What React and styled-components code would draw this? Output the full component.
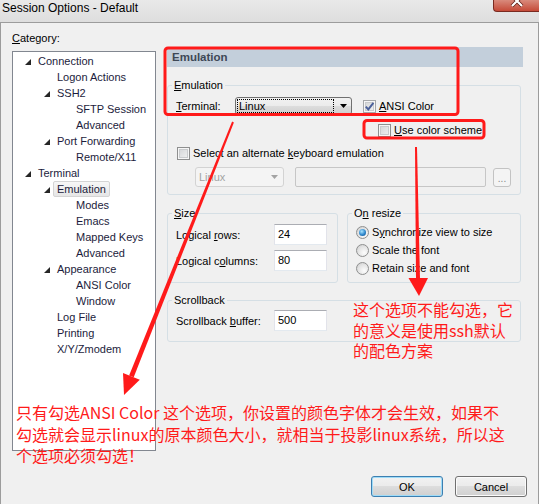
import React from "react";
import styled, { createGlobalStyle } from "styled-components";

const TREE = [
  { label: "Connection", level: 0, open: true },
  { label: "Logon Actions", level: 1 },
  { label: "SSH2", level: 1, open: true },
  { label: "SFTP Session", level: 2 },
  { label: "Advanced", level: 2 },
  { label: "Port Forwarding", level: 1, open: true },
  { label: "Remote/X11", level: 2 },
  { label: "Terminal", level: 0, open: true },
  { label: "Emulation", level: 1, open: true, selected: true },
  { label: "Modes", level: 2 },
  { label: "Emacs", level: 2 },
  { label: "Mapped Keys", level: 2 },
  { label: "Advanced", level: 2 },
  { label: "Appearance", level: 1, open: true },
  { label: "ANSI Color", level: 2 },
  { label: "Window", level: 2 },
  { label: "Log File", level: 1 },
  { label: "Printing", level: 1 },
  { label: "X/Y/Zmodem", level: 1 },
];

const Expander = () => (
  <svg width="6" height="6" viewBox="0 0 6 6">
    <polygon points="6,0 6,6 0,6" fill="#262626" />
  </svg>
);

const Check = () => (
  <svg width="11" height="11" viewBox="0 0 11 11">
    <path d="M1.8 5.6 L4.3 8.4 L9.4 1.8" fill="none" stroke="#4a5f9a" strokeWidth="1.9" />
  </svg>
);

const Arrow = () => (
  <svg width="7" height="4" viewBox="0 0 7 4">
    <polygon points="0,0 7,0 3.5,4" fill="currentColor" />
  </svg>
);

const App = () => {
  return (
    <Window>
      <GlobalStyle />
      <TitleBar>
        <Title>Session Options - Default</Title>
        <CloseButton>
          <svg width="46" height="12" viewBox="0 0 46 12">
            <path d="M19 -4 L29 6 M29 -4 L19 6" stroke="#5a1a12" strokeWidth="3.6" />
            <path d="M19 -4 L29 6 M29 -4 L19 6" stroke="#fff" strokeWidth="2.2" />
          </svg>
        </CloseButton>
      </TitleBar>

      <Client>
        <Main>
          <LeftColumn>
            <Caption>
              <u>C</u>ategory:
            </Caption>
            <Tree>
              {TREE.map((item, i) => (
                <TreeItem key={i} $level={item.level}>
                  <Toggle>{item.open && <Expander />}</Toggle>
                  <ItemLabel $selected={item.selected}>{item.label}</ItemLabel>
                </TreeItem>
              ))}
            </Tree>
          </LeftColumn>

          <RightColumn>
            <Header>Emulation</Header>

            <Groups>
              <Group $mt={11} $pt={5} $pb={7}>
                <Legend>
                  <u>E</u>mulation
                </Legend>
                <Row $h={18}>
                  <FieldLabel $w={59}>
                    <u>T</u>erminal:
                  </FieldLabel>
                  <Select>
                    <Focus>Linux</Focus>
                    <SelectArrow>
                      <Arrow />
                    </SelectArrow>
                  </Select>
                  <CheckRow $ml={11}>
                    <CheckBox $muted>
                      <Check />
                    </CheckBox>
                    <span>
                      <u>A</u>NSI Color
                    </span>
                  </CheckRow>
                </Row>
                <Row $h={16} $mt={7}>
                  <CheckRow $ml={202}>
                    <CheckBox />
                    <span>
                      <u>U</u>se color scheme
                    </span>
                  </CheckRow>
                </Row>
                <Row $h={16} $mt={7}>
                  <CheckRow $ml={1}>
                    <CheckBox />
                    <span>
                      Select an alternate <u>k</u>eyboard emulation
                    </span>
                  </CheckRow>
                </Row>
                <Row $h={20} $mt={6}>
                  <DisabledCombo>
                    <span>Linux</span>
                    <Arrow />
                  </DisabledCombo>
                  <DisabledField />
                  <DotsButton>...</DotsButton>
                </Row>
              </Group>

              <Pair>
                <Group $mt={11} $pt={4} $pb={11} $flex="0 0 171px">
                  <Legend>
                    <u>S</u>ize
                  </Legend>
                  <Row $h={21}>
                    <FieldLabel $w={98}>
                      Logical <u>r</u>ows:
                    </FieldLabel>
                    <TextBox>24</TextBox>
                  </Row>
                  <Row $h={21} $mt={5}>
                    <FieldLabel $w={98}>
                      Logical c<u>o</u>lumns:
                    </FieldLabel>
                    <TextBox>80</TextBox>
                  </Row>
                </Group>

                <Group $mt={11} $pt={3} $pb={5} $flex="1">
                  <Legend>
                    O<u>n</u> resize
                  </Legend>
                  <RadioRow>
                    <Radio $on />
                    <span>
                      S<u>y</u>nchronize view to size
                    </span>
                  </RadioRow>
                  <RadioRow>
                    <Radio />
                    <span>Scale the font</span>
                  </RadioRow>
                  <RadioRow>
                    <Radio />
                    <span>Retain size and font</span>
                  </RadioRow>
                </Group>
              </Pair>

              <Group $mt={10} $pt={3} $pb={10}>
                <Legend>Scrollback</Legend>
                <Row $h={21}>
                  <FieldLabel $w={98}>
                    Scrollback <u>b</u>uffer:
                  </FieldLabel>
                  <TextBox>500</TextBox>
                </Row>
              </Group>
            </Groups>
          </RightColumn>
        </Main>

        <Buttons>
          <Button $default>OK</Button>
          <Button>Cancel</Button>
        </Buttons>
      </Client>

      <Marks width="539" height="504" viewBox="0 0 539 504">
        <rect x="165" y="48" width="293" height="66.5" rx="3" fill="none" stroke="#ff1a1a" strokeWidth="3" />
        <rect x="364" y="120.5" width="120" height="17.5" rx="3" fill="none" stroke="#ff1a1a" strokeWidth="3" />
        <polygon points="233.9,122.4 232.1,121.6 129.1,375.5 133.7,377.3" fill="#ff1a1a" />
        <polygon points="123,373.1 139.8,379.7 124,395" fill="#ff1a1a" />
        <polygon points="415,147 417,147 420,279 416,279" fill="#ff1a1a" />
        <polygon points="408.5,278 428,278 419,296" fill="#ff1a1a" />
      </Marks>

      <Note $x={353} $y={299} $lh={20.5}>
        这个选项不能勾选，它
        <br />
        的意义是使用ssh默认
        <br />
        的配色方案
      </Note>
      <Note $x={16} $y={402} $lh={21.5}>
        只有勾选ANSI Color 这个选项，你设置的颜色字体才会生效，如果不
        <br />
        勾选就会显示linux的原本颜色大小，就相当于投影linux系统，所以这
        <br />
        个选项必须勾选！
      </Note>
    </Window>
  );
};

export default App;

const GlobalStyle = createGlobalStyle`
  html, body {
    margin: 0;
    padding: 0;
    background: #f0f0f0;
  }
  body {
    font-family: "Liberation Sans", Arial, sans-serif;
    font-size: 11px;
    color: #000;
  }
  u {
    text-underline-offset: 1px;
  }
`;

const Window = styled.div`
  position: relative;
  width: 539px;
  height: 504px;
  overflow: hidden;
  display: flex;
  flex-direction: column;
  background: #f0f0f0;
`;
const TitleBar = styled.div`
  height: 22px;
  flex: none;
  display: flex;
  align-items: flex-start;
  background: linear-gradient(#e9e9e9, #dedede);
`;
const Title = styled.div`
  padding-left: 2px;
  font-size: 12px;
  line-height: 16px;
  color: #000;
`;
const CloseButton = styled.div`
  margin-left: auto;
  width: 46px;
  height: 12px;
  box-sizing: border-box;
  border: 1px solid #7a2a20;
  border-top: none;
  border-right: none;
  border-radius: 0 0 0 4px;
  background: linear-gradient(#d98a7c, #c54a38);
  overflow: hidden;
  svg {
    display: block;
    margin-left: -1px;
  }
`;
const Client = styled.div`
  flex: 1;
  display: flex;
  flex-direction: column;
  border: 1px solid #9c9c9c;
  border-bottom: none;
  background: #f0f0f0;
  padding: 0 14px 7px 11px;
`;
const Main = styled.div`
  display: flex;
  gap: 11px;
  margin-top: 8px;
`;
const LeftColumn = styled.div`
  width: 144px;
  display: flex;
  flex-direction: column;
`;
const Caption = styled.div`
  line-height: 14px;
  height: 14px;
`;
const Tree = styled.div`
  margin-top: 6px;
  height: 400px;
  box-sizing: border-box;
  border: 1px solid #828790;
  background: #fff;
  padding-top: 1px;
`;
const TreeItem = styled.div`
  display: flex;
  align-items: center;
  height: 16px;
  padding-left: ${(p) => 12 + p.$level * 19}px;
  color: #1c1c3c;
  white-space: nowrap;
`;
const Toggle = styled.span`
  width: 13px;
  flex: none;
  display: flex;
  align-items: center;
  padding-top: 1px;
  svg {
    display: block;
  }
`;
const ItemLabel = styled.span`
  line-height: 14px;
  ${(p) =>
    p.$selected &&
    `
    margin-left: -4px;
    padding: 0 3px;
    border: 1px solid #d4d4d4;
    border-radius: 2px;
    background: linear-gradient(#f7f7f7, #e6e6e6);
  `}
`;
const RightColumn = styled.div`
  width: 356px;
  padding-top: 16px;
  display: flex;
  flex-direction: column;
`;
const Header = styled.div`
  height: 20px;
  line-height: 20px;
  padding-left: 5px;
  background: #c3cfdb;
  color: #3e4856;
  font-weight: bold;
  font-size: 11.5px;
`;
const Groups = styled.div`
  width: 354px;
  display: flex;
  flex-direction: column;
`;
const Pair = styled.div`
  display: flex;
  gap: 9px;
`;
const Group = styled.fieldset`
  box-sizing: border-box;
  margin: ${(p) => p.$mt || 0}px 0 0;
  padding: ${(p) => p.$pt}px 8px ${(p) => p.$pb}px;
  border: 1px solid #d5dfe5;
  border-radius: 3px;
  min-width: 0;
  flex: ${(p) => p.$flex || "none"};
`;
const Legend = styled.legend`
  margin-left: -4px;
  padding: 0 2px;
  line-height: 14px;
`;
const Row = styled.div`
  display: flex;
  align-items: center;
  height: ${(p) => p.$h}px;
  margin-top: ${(p) => p.$mt || 0}px;
`;
const FieldLabel = styled.span`
  width: ${(p) => p.$w}px;
  flex: none;
`;
const Select = styled.div`
  width: 117px;
  height: 18px;
  box-sizing: border-box;
  border: 1px solid #707070;
  border-radius: 3px;
  background: linear-gradient(#f2f2f2 0%, #ebebeb 50%, #dddddd 50%, #cfcfcf 100%);
  display: flex;
  align-items: center;
  padding-left: 1px;
`;
const Focus = styled.span`
  width: 97px;
  height: 14px;
  box-sizing: border-box;
  border: 1px dotted #000;
  line-height: 12px;
  padding-left: 1px;
`;
const SelectArrow = styled.span`
  margin-left: 6px;
  color: #000;
  display: flex;
`;
const CheckRow = styled.label`
  display: flex;
  align-items: center;
  gap: 3px;
  margin-left: ${(p) => p.$ml || 0}px;
`;
const CheckBox = styled.span`
  width: 13px;
  height: 13px;
  box-sizing: border-box;
  flex: none;
  border: 1px solid ${(p) => (p.$muted ? "#a5a7a9" : "#8e8f8f")};
  background: linear-gradient(135deg, #d0d2d4 0%, #f4f4f4 100%);
  box-shadow: inset 0 0 0 1px #f6f6f6, inset 0 0 0 2px #c9cbcd;
  display: flex;
  align-items: center;
  justify-content: center;
  svg {
    display: block;
  }
`;
const DisabledCombo = styled.div`
  margin-left: 19px;
  width: 89px;
  height: 20px;
  box-sizing: border-box;
  border: 1px solid #d3d3d3;
  border-radius: 3px;
  background: #f4f4f4;
  color: #a3a3a3;
  display: flex;
  align-items: center;
  justify-content: space-between;
  padding: 0 5px 0 3px;
`;
const DisabledField = styled.div`
  margin-left: 11px;
  width: 191px;
  height: 20px;
  box-sizing: border-box;
  border: 1px solid #c6c6c6;
  border-radius: 2px;
  background: #f0f0f0;
`;
const DotsButton = styled.div`
  margin-left: 7px;
  width: 18px;
  height: 19px;
  box-sizing: border-box;
  border: 1px solid #c3c3c3;
  border-radius: 3px;
  background: #f4f4f4;
  color: #8a8a8a;
  text-align: center;
  line-height: 19px;
  font-size: 10px;
`;
const TextBox = styled.div`
  width: 53px;
  height: 21px;
  box-sizing: border-box;
  border: 1px solid #e2e3ea;
  border-top-color: #abadb3;
  border-bottom-color: #e3e9ef;
  background: #fff;
  padding-left: 3px;
  line-height: 19px;
`;
const RadioRow = styled.label`
  display: flex;
  align-items: center;
  gap: 3px;
  height: 18px;
`;
const Radio = styled.span`
  width: 13px;
  height: 13px;
  box-sizing: border-box;
  flex: none;
  border-radius: 50%;
  border: 1px solid #8e8f8f;
  background: radial-gradient(circle at 65% 70%, #fdfdfd 0%, #e4e4e4 55%, #c8c8c8 100%);
  display: flex;
  align-items: center;
  justify-content: center;
  &::after {
    content: "";
    display: ${(p) => (p.$on ? "block" : "none")};
    width: 7px;
    height: 7px;
    border-radius: 50%;
    background: radial-gradient(circle at 40% 35%, #a8e4ff 0%, #2d86cc 55%, #0f4a84 100%);
  }
`;
const Buttons = styled.div`
  margin-top: auto;
  display: flex;
  justify-content: flex-end;
  gap: 12px;
  margin-right: -3px;
`;
const Button = styled.button`
  width: 72px;
  height: 21px;
  box-sizing: border-box;
  padding: 0;
  font: 11px "Liberation Sans", Arial, sans-serif;
  color: #000;
  border: 1px solid ${(p) => (p.$default ? "#3c7fb1" : "#707070")};
  border-radius: 3px;
  background: linear-gradient(#f2f2f2 0%, #ebebeb 50%, #dddddd 50%, #cfcfcf 100%);
  box-shadow: inset 0 0 0 1px ${(p) => (p.$default ? "#9fdcf8" : "#fbfbfb")};
`;
const Marks = styled.svg`
  position: absolute;
  left: 0;
  top: 0;
  pointer-events: none;
`;
const Note = styled.div`
  position: absolute;
  left: ${(p) => p.$x}px;
  top: ${(p) => p.$y}px;
  font-family: "Noto Sans CJK SC", sans-serif;
  font-size: 16px;
  line-height: ${(p) => p.$lh}px;
  color: #ff1a1a;
  white-space: nowrap;
`;
